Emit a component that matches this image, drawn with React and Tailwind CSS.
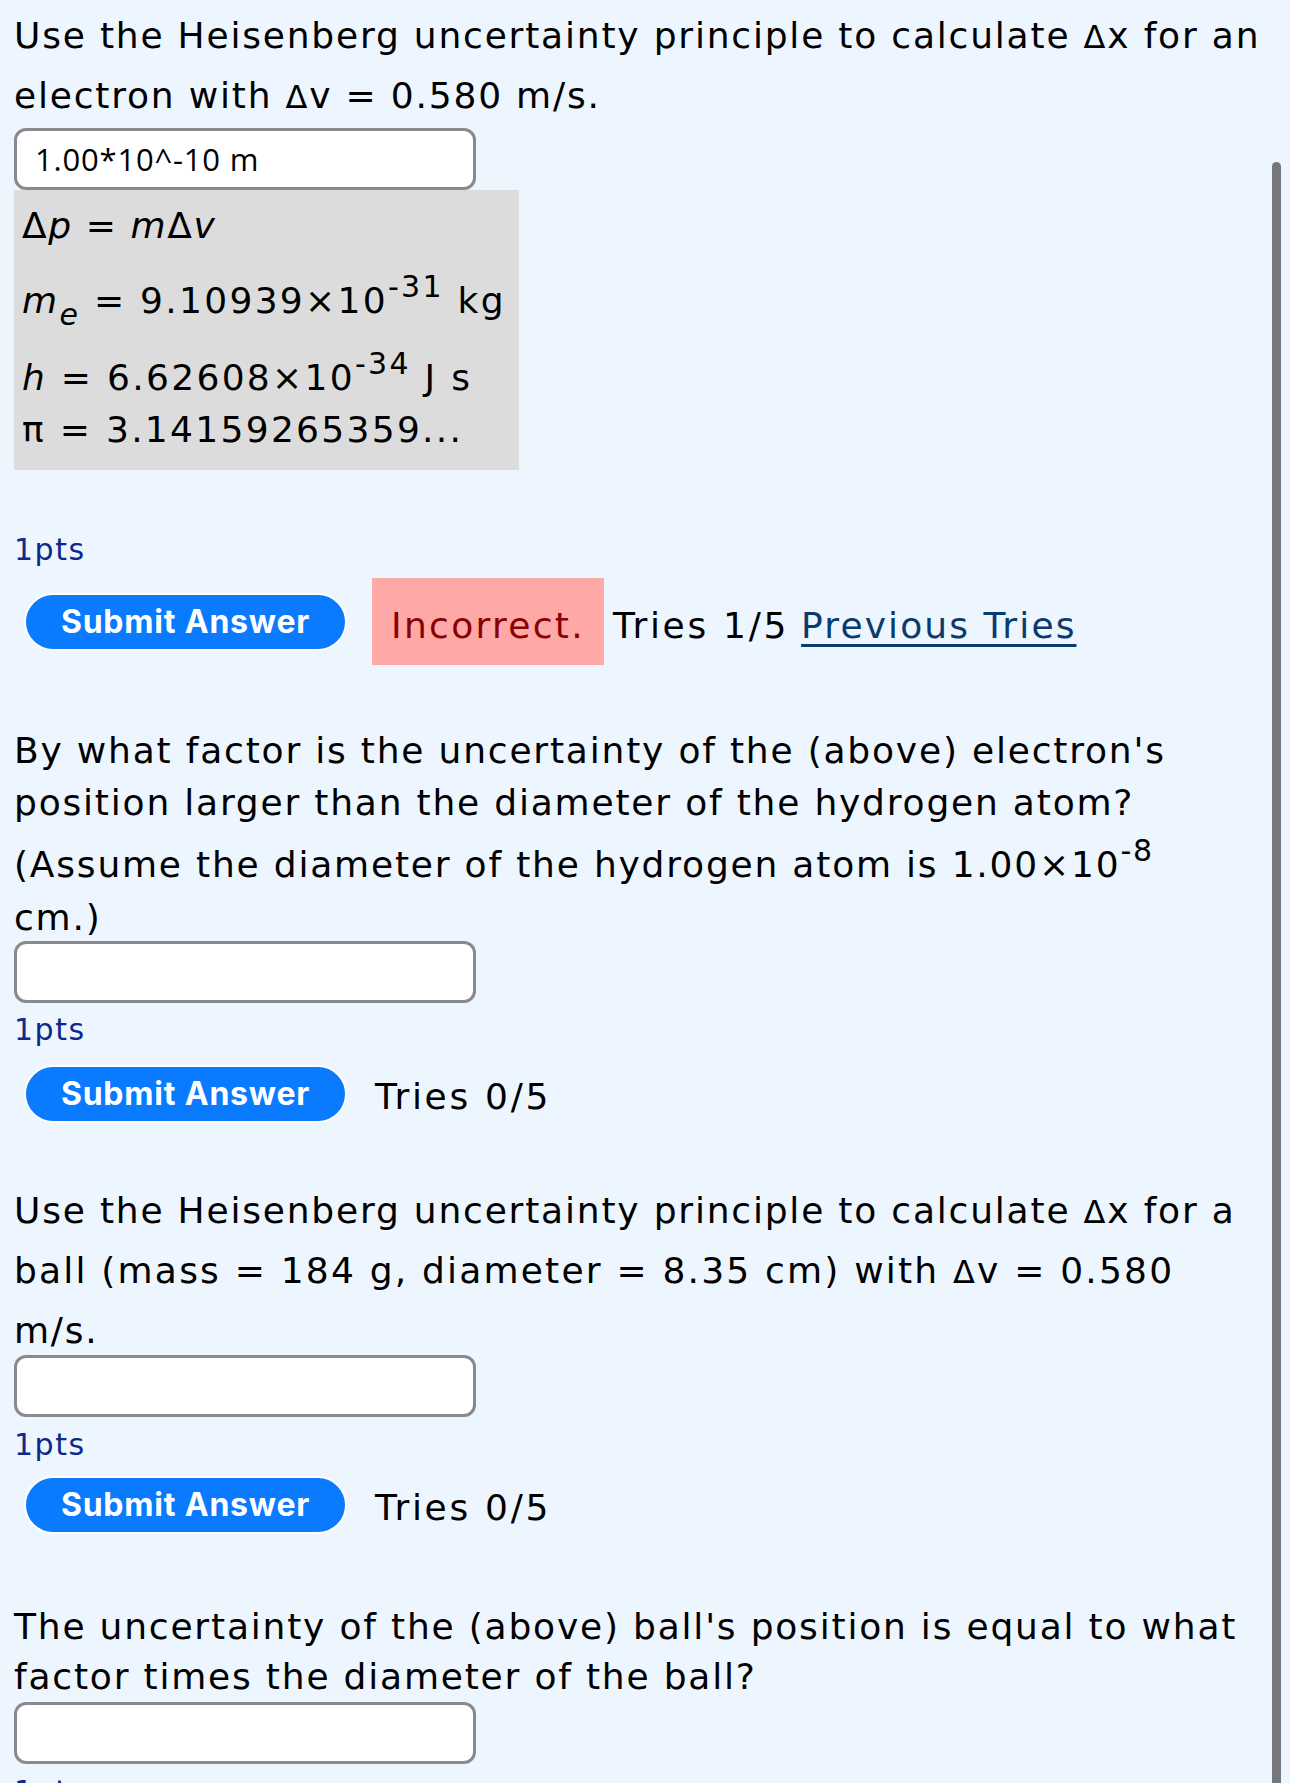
// Heisenberg homework page
const D = () => <span className="text-[32px] leading-none">Δ</span>;

const Sup = ({ children }) => (
    <span className="relative -top-[16px] text-[30px] leading-[0]">{children}</span>
);

const AnswerBox = ({ value }) => (
    <div className="h-[62px] w-[462px] bg-white border-[3px] border-[#8a8a8e] rounded-[12px] flex items-center pl-[18px] font-['Open_Sans',sans-serif] text-[31px] tracking-[0.8px] text-black">
        {value}
    </div>
);

const Pts = ({ mt }) => (
    <div className={`${mt} text-[30px] leading-[40px] tracking-[1.5px] text-[#0d2a8a]`}>1pts</div>
);

const SubmitButton = () => (
    <button className="h-[58px] w-[323px] rounded-full border-2 border-white bg-[#0a7bff] text-white font-['Inter',sans-serif] font-bold text-[32px] tracking-[0.8px] flex items-center justify-center">
        Submit Answer
    </button>
);

export default function App() {
    return (
        <div className="relative h-[1783px] overflow-hidden bg-[#edf5ff] text-black font-['DejaVu_Sans',Verdana,sans-serif] tracking-[1.8px] whitespace-nowrap">
            <div className="pl-[14px] pt-[6px]">
                {/* Question 1 */}
                <p className="text-[36px] leading-[60px]">
                    Use the Heisenberg uncertainty principle to calculate <D />x for an
                    <br />
                    electron with <D />v = 0.580 m/s.
                </p>
                <div className="mt-[2px]">
                    <AnswerBox value="1.00*10^-10 m" />
                </div>
                <div className="w-[505px] bg-[#dcdcdc] pl-[8px] pb-[26px] text-[36px] tracking-[2.3px]">
                    <div className="leading-[71px] tracking-[1.6px]">
                        Δ<i>p</i> = <i>m</i>Δ<i>v</i>
                    </div>
                    <div className="leading-[79px]">
                        <i>m</i>
                        <span className="relative top-[12px] text-[30px] leading-[0] italic">e</span> = 9.10939×10
                        <Sup>-31</Sup> kg
                    </div>
                    <div className="leading-[75px]">
                        <i>h</i> = 6.62608×10<Sup>-34</Sup> J s
                    </div>
                    <div className="leading-[29px]">π = 3.14159265359...</div>
                </div>
                <Pts mt="mt-[60px]" />
                <div className="mt-[8px] flex items-center pl-[10px]">
                    <SubmitButton />
                    <div className="ml-[25px] h-[87px] w-[232px] bg-[#ffa8a8] text-[#8b0000] text-[36px] tracking-[2.3px] flex items-center justify-center pt-[8px]">
                        Incorrect.
                    </div>
                    <span className="ml-[9px] pt-[8px] text-[36px] tracking-[2.7px]">Tries 1/5</span>
                    <a href="#" className="ml-[12px] pt-[8px] text-[36px] tracking-[2.1px] text-[#0b3a6e] underline decoration-[3px] underline-offset-[6px]">
                        Previous Tries
                    </a>
                </div>

                {/* Question 2 */}
                <div className="mt-[60px] text-[36px]">
                    <div className="leading-[52px]">By what factor is the uncertainty of the (above) electron's</div>
                    <div className="leading-[52px]">position larger than the diameter of the hydrogen atom?</div>
                    <div className="leading-[71px]">
                        (Assume the diameter of the hydrogen atom is 1.00×10<Sup>-8</Sup>
                    </div>
                    <div className="leading-[35px]">cm.)</div>
                </div>
                <div className="mt-[6px]">
                    <AnswerBox value="" />
                </div>
                <Pts mt="mt-[7px]" />
                <div className="mt-[13px] flex items-center pl-[10px]">
                    <SubmitButton />
                    <span className="ml-[28px] pt-[7px] text-[36px] tracking-[2.7px]">Tries 0/5</span>
                </div>

                {/* Question 3 */}
                <div className="mt-[57px] text-[36px]">
                    <div className="leading-[60px]">
                        Use the Heisenberg uncertainty principle to calculate <D />x for a
                    </div>
                    <div className="leading-[60px] tracking-[2.2px]">
                        ball (mass = 184 g, diameter = 8.35 cm) with <D />v = 0.580
                    </div>
                    <div className="leading-[48px] pt-[6px]">m/s.</div>
                </div>
                <AnswerBox value="" />
                <Pts mt="mt-[8px]" />
                <div className="mt-[9px] flex items-center pl-[10px]">
                    <SubmitButton />
                    <span className="ml-[28px] pt-[7px] text-[36px] tracking-[2.7px]">Tries 0/5</span>
                </div>

                {/* Question 4 */}
                <div className="mt-[67px] text-[36px] leading-[50px]">
                    The uncertainty of the (above) ball's position is equal to what
                    <br />
                    factor times the diameter of the ball?
                </div>
                <AnswerBox value="" />
                <Pts mt="mt-[8px]" />
            </div>

            {/* scrollbar thumb */}
            <div className="absolute left-[1272px] top-[162px] w-[9px] h-[1700px] rounded-full bg-[#77787e]" />
        </div>
    );
}
